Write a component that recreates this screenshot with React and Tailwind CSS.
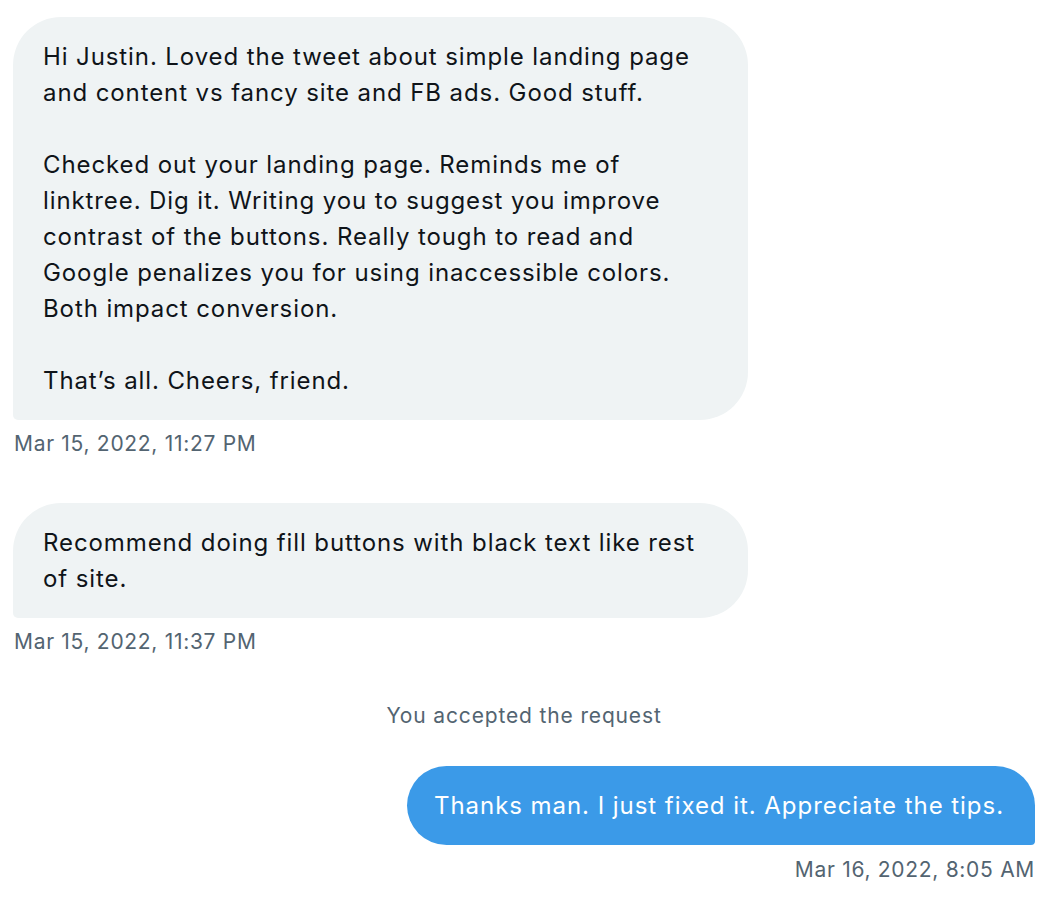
import React from 'react';

const font = { fontFamily: 'Inter, "Noto Sans", sans-serif' };

const messages = [
  {
    id: 1,
    lines: [
      'Hi Justin. Loved the tweet about simple landing page',
      'and content vs fancy site and FB ads. Good stuff.',
      '',
      'Checked out your landing page. Reminds me of',
      'linktree. Dig it. Writing you to suggest you improve',
      'contrast of the buttons. Really tough to read and',
      'Google penalizes you for using inaccessible colors.',
      'Both impact conversion.',
      '',
      'That’s all. Cheers, friend.',
    ],
    time: 'Mar 15, 2022, 11:27 PM',
  },
  {
    id: 2,
    lines: ['Recommend doing fill buttons with black text like rest', 'of site.'],
    time: 'Mar 15, 2022, 11:37 PM',
  },
];

const App = () => {
  return (
    <div className="min-h-screen bg-white px-[13px] pt-[17px] pb-6 w-[1056px]" style={font}>
      {messages.map((m) => (
        <div key={m.id} className="flex flex-col items-start mb-[47px]">
          <div className="w-[735px] bg-[#eff3f4] rounded-[48px] rounded-bl-[5px] pl-[30px] pr-[20px] pt-[22px] pb-[21px] text-[24px] leading-[36px] tracking-[0.9px] text-[#0f1419]">
            {m.lines.map((line, i) => (
              <div key={i} className="whitespace-nowrap h-[36px]">
                {line}
              </div>
            ))}
          </div>
          <div className="mt-[12px] ml-px text-[21px] leading-[24px] tracking-[0.7px] text-[#536471]">{m.time}</div>
        </div>
      ))}

      <div className="flex justify-center mr-[8px] pt-[3px]">
        <div className="text-[21px] leading-[24px] tracking-[0.85px] text-[#536471]">You accepted the request</div>
      </div>

      <div className="flex flex-col items-end mt-[38px] mr-[8px]">
        <div className="bg-[#3b9ae8] rounded-[48px] rounded-br-[5px] pl-[27px] pr-[31px] pt-[22px] pb-[21px] text-[24px] leading-[36px] tracking-[0.95px] text-white whitespace-nowrap">
          Thanks man. I just fixed it. Appreciate the tips.
        </div>
        <div className="mt-[13px] text-[21px] leading-[24px] tracking-[0.7px] text-[#536471]">Mar 16, 2022, 8:05 AM</div>
      </div>
    </div>
  );
};

export default App;
